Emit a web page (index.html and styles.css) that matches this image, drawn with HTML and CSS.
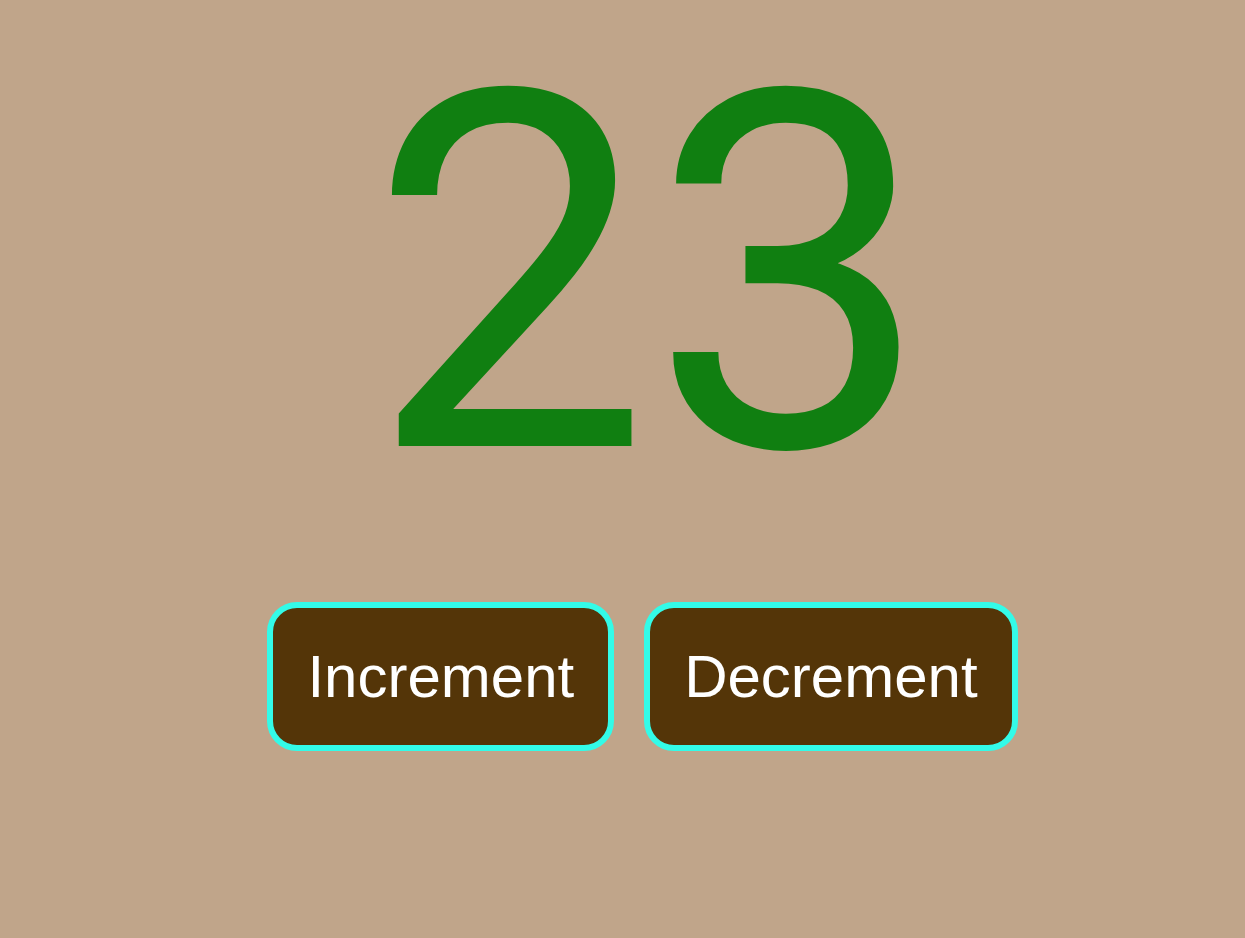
FILE: index.html
```html
<!DOCTYPE html>
<html lang="en">
<head>
<meta charset="utf-8">
<title>Counter</title>
<link rel="stylesheet" href="styles.css">
</head>
<body>
  <main class="counter">
    <div class="counter-value">23</div>
    <div class="counter-actions">
      <button class="counter-btn" type="button">Increment</button>
      <button class="counter-btn" type="button">Decrement</button>
    </div>
  </main>
</body>
</html>
```
FILE: styles.css
```css
html, body {
  margin: 0;
  height: 100%;
}

body {
  background: #c0a58a;
}

.counter {
  display: flex;
  flex-direction: column;
  align-items: center;
  padding: 0 0 0 40px;
}

.counter-value {
  font-family: Roboto, "Liberation Sans", sans-serif;
  font-size: 500px;
  line-height: 1.1;
  color: #107f11;
  padding-left: 15px;
}

.counter-actions {
  display: flex;
  gap: 30px;
  margin-top: 52px;
}

.counter-btn {
  font-family: "Liberation Sans", Arial, sans-serif;
  font-size: 60px;
  line-height: normal;
  color: #ffffff;
  background: #543508;
  border: 6px solid #33fbe8;
  border-radius: 30px;
  padding: 34px 34px;
  cursor: pointer;
}
```
